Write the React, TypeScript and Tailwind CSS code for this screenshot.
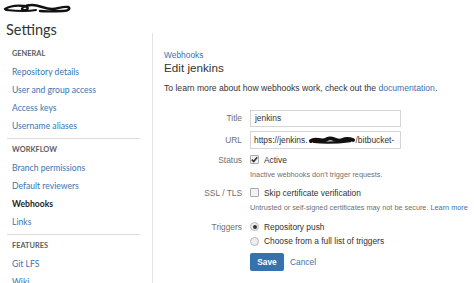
import React from 'react';

const sans = { fontFamily: '"Liberation Sans", Arial, sans-serif' };

function NavHeader({ children }: { children: React.ReactNode }) {
    return <div className="h-[18px] pl-[12px] text-[7.4px] font-bold leading-[18px] text-[#5e5e5e]">{children}</div>;
}

function NavItem({ children, active }: { children: React.ReactNode; active?: boolean }) {
    return (
        <div className={`h-[18px] pl-[12px] text-[8.6px] leading-[18px] ${active ? 'font-bold text-[#222]' : 'text-[#3b73af]'}`}>
            {children}
        </div>
    );
}

function Divider() {
    return <div className="mb-[2px] ml-[7px] mt-[3px] h-px w-[133px] bg-[#dcdcdc]" />;
}

function CheckBox({ checked }: { checked?: boolean }) {
    return (
        <span className="relative inline-flex h-[9px] w-[9px] shrink-0 items-center justify-center rounded-[1px] border border-[#a9a9a9] bg-[#f3f3f3]">
            {checked && (
                <svg viewBox="0 0 10 10" className="absolute h-[9px] w-[9px]">
                    <path d="M2 5.2 L4.1 7.3 L8 2.6" fill="none" stroke="#333" strokeWidth="1.8" />
                </svg>
            )}
        </span>
    );
}

function Radio({ checked }: { checked?: boolean }) {
    return (
        <span className="inline-flex h-[9px] w-[9px] shrink-0 items-center justify-center rounded-full border border-[#b5b5b5] bg-[#eeeeee]">
            {checked && <span className="h-[4px] w-[4px] rounded-full bg-[#333]" />}
        </span>
    );
}

function Row({ label, children, className = '' }: { label?: string; children: React.ReactNode; className?: string }) {
    return (
        <div className={`flex items-center ${className}`}>
            <div className="w-[78px] shrink-0 text-right text-[8.4px] text-[#707070]">{label}</div>
            <div className="ml-[8px] flex min-w-0 items-center">{children}</div>
        </div>
    );
}

export default function App() {
    return (
        <div className="flex h-[283px] w-[474px] overflow-hidden bg-white" style={{ fontFamily: 'Lato, "Noto Sans", sans-serif' }}>
            {/* Sidebar */}
            <div className="w-[152px] shrink-0">
                <svg viewBox="0 0 70 12" className="ml-[2px] mt-[2px] block h-[12px] w-[70px]">
                    <path d="M3 7 C8 4 14 3 22 4 C28 5 26 9 21 8 C18 7 22 3 30 3 C38 3 42 7 50 7 C56 7 60 4 66 5 C69 6 67 9 61 9 C54 9 46 10 38 9" fill="none" stroke="#111" strokeWidth="2.4" strokeLinecap="round" />
                    <path d="M4 8 C14 9 24 10 34 8" fill="none" stroke="#111" strokeWidth="2" strokeLinecap="round" />
                </svg>
                <div className="mt-[6px] h-[20px] pl-[6px] text-[14.5px] leading-[20px] text-[#333]">Settings</div>
                <div className="mt-[5px]">
                    <NavHeader>GENERAL</NavHeader>
                    <NavItem>Repository details</NavItem>
                    <NavItem>User and group access</NavItem>
                    <NavItem>Access keys</NavItem>
                    <NavItem>Username aliases</NavItem>
                    <Divider />
                    <NavHeader>WORKFLOW</NavHeader>
                    <NavItem>Branch permissions</NavItem>
                    <NavItem>Default reviewers</NavItem>
                    <NavItem active>Webhooks</NavItem>
                    <NavItem>Links</NavItem>
                    <Divider />
                    <NavHeader>FEATURES</NavHeader>
                    <NavItem>Git LFS</NavItem>
                    <NavItem>Wiki</NavItem>
                </div>
            </div>

            {/* Main panel */}
            <div className="mt-[33px] flex-1 border-l border-[#e3e3e3] pl-[11px] text-[#333]" style={sans}>
                <div className="mt-[17px] text-[8.4px] leading-[10px] text-[#3b73af]">Webhooks</div>
                <div className="text-[11.7px] leading-[16px] text-[#333]">Edit jenkins</div>
                <div className="mt-[6px] text-[8.6px] leading-[12px]">
                    To learn more about how webhooks work, check out the <span className="text-[#3b73af]">documentation</span>.
                </div>

                <div className="mt-[16px] flex flex-col text-[8.4px]">
                    <Row label="Title" className="h-[17px]">
                        <div className="flex h-[17px] w-[151px] items-center border border-[#d5d5d5] px-[4px] text-[#333]">jenkins</div>
                    </Row>
                    <Row label="URL" className="mt-[4px] h-[18px]">
                        <div className="flex h-[18px] w-[151px] items-center overflow-hidden whitespace-nowrap border border-[#d5d5d5] px-[3px] text-[#333]">
                            https://jenkins.
                            <svg viewBox="0 0 50 10" className="h-[10px] w-[48px] shrink-0">
                                <path d="M3 6 C8 2 14 8 20 4 C26 1 30 8 36 5 C40 3 44 4 47 5" fill="none" stroke="#111" strokeWidth="4" strokeLinecap="round" />
                                <path d="M6 7 C16 8 30 8 44 6" fill="none" stroke="#111" strokeWidth="2.5" strokeLinecap="round" />
                            </svg>
                            /bitbucket-
                        </div>
                    </Row>
                    <Row label="Status" className="mt-[3px] h-[16px]">
                        <CheckBox checked />
                        <span className="ml-[5px] text-[#333]">Active</span>
                    </Row>
                    <Row className="h-[15px]">
                        <span className="text-[7.3px] text-[#707070]">Inactive webhooks don't trigger requests.</span>
                    </Row>
                    <Row label="SSL / TLS" className="mt-[2px] h-[16px]">
                        <CheckBox />
                        <span className="ml-[5px] text-[#333]">Skip certificate verification</span>
                    </Row>
                    <Row className="h-[15px]">
                        <span className="whitespace-nowrap text-[7.3px] text-[#707070]">
                            Untrusted or self-signed certificates may not be secure. <span className="text-[#3b73af]">Learn more</span>
                        </span>
                    </Row>
                    <Row label="Triggers" className="mt-[3px] h-[16px]">
                        <Radio checked />
                        <span className="ml-[5px] text-[#333]">Repository push</span>
                    </Row>
                    <Row className="h-[13px]">
                        <Radio />
                        <span className="ml-[5px] text-[#333]">Choose from a full list of triggers</span>
                    </Row>
                    <Row className="mt-[5px] h-[18px]">
                        <button type="button" className="h-[18px] w-[34px] rounded-[2px] bg-[#3572b0] text-[8.4px] font-bold text-white">Save</button>
                        <span className="ml-[6px] text-[#3b73af]">Cancel</span>
                    </Row>
                </div>
            </div>
        </div>
    );
}
